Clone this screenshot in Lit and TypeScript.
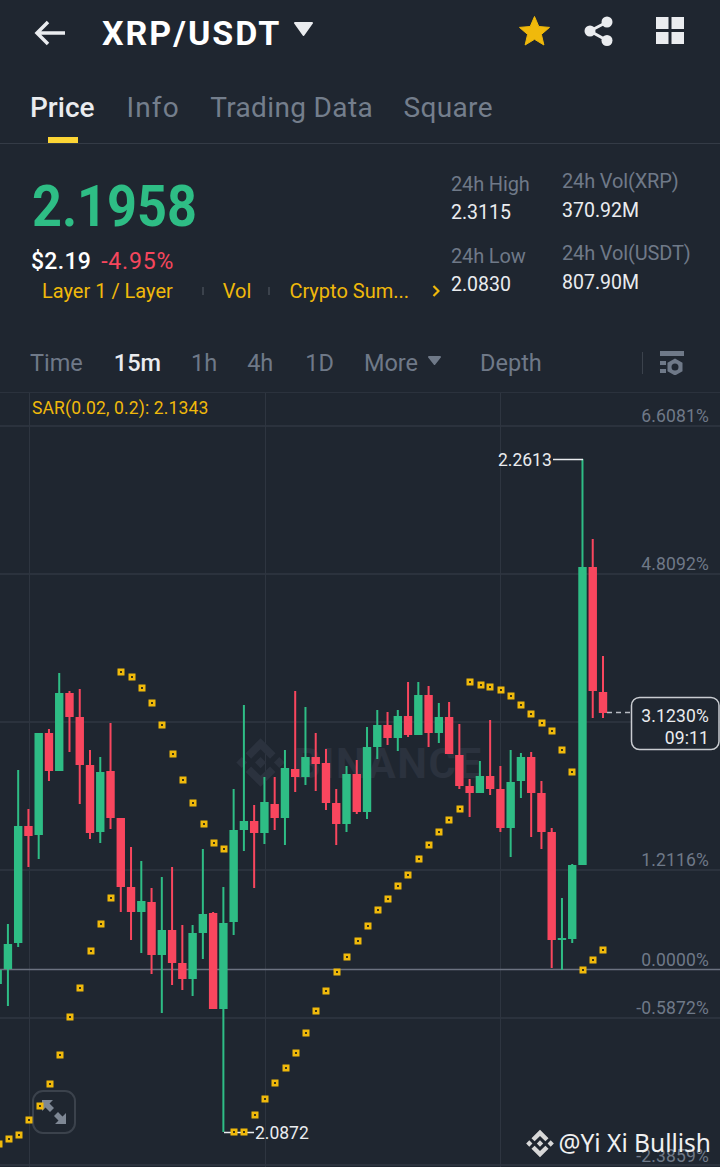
import { LitElement, css, html, svg } from 'lit';
import { customElement } from 'lit/decorators.js';

// [wickTop, wickBottom, bodyTop, bodyBottom, up]
type Candle = [number, number, number, number, number];

const CANDLES: Candle[] = [
  [960, 1000, 970, 984, 1], [924, 1006, 944, 969, 1], [770, 947, 826, 943, 1], [809, 867, 826, 836, 0],
  [733, 859, 733, 835, 1], [729, 781, 733, 771, 0], [673, 771, 693, 771, 1], [691, 752, 693, 717, 0],
  [689, 804, 717, 765, 0], [750, 839, 765, 833, 0], [757, 843, 772, 832, 1], [723, 829, 771, 818, 0],
  [818, 912, 818, 887, 0], [847, 940, 887, 912, 0], [861, 953, 901, 912, 1], [888, 974, 902, 955, 0],
  [877, 1013, 930, 955, 1], [867, 985, 930, 963, 0], [925, 990, 963, 979, 0], [925, 996, 933, 979, 1],
  [849, 959, 914, 933, 1], [912, 1009, 913, 1009, 0], [887, 1132, 923, 1009, 1], [789, 935, 830, 922, 1],
  [705, 851, 821, 830, 1], [805, 888, 821, 833, 0], [777, 844, 802, 833, 1], [777, 830, 804, 818, 0],
  [750, 845, 768, 818, 1], [691, 792, 769, 777, 0], [707, 785, 757, 777, 1], [733, 791, 757, 764, 0],
  [749, 810, 763, 803, 0], [789, 845, 803, 824, 0], [766, 832, 774, 824, 1], [760, 814, 774, 812, 0],
  [727, 819, 747, 812, 1], [710, 759, 725, 747, 1], [712, 745, 725, 738, 0], [710, 751, 716, 738, 1],
  [682, 737, 716, 735, 0], [682, 735, 695, 735, 1], [686, 747, 695, 733, 0], [703, 743, 717, 733, 1],
  [702, 754, 717, 754, 0], [724, 789, 755, 786, 0], [779, 817, 786, 793, 0], [761, 793, 776, 793, 1],
  [720, 795, 776, 789, 0], [766, 832, 789, 828, 0], [750, 857, 782, 828, 1], [753, 798, 757, 781, 1],
  [752, 837, 757, 793, 0], [781, 849, 793, 832, 0], [828, 968, 832, 940, 0], [898, 970, 938, 940, 1],
  [864, 943, 865, 939, 1], [459, 865, 567, 865, 1], [539, 718, 567, 691, 0], [656, 718, 692, 713, 0],
];

// [x, y] of the SAR dots
const SAR: [number, number][] = [
  [-1, 1144], [9, 1139], [19, 1135], [29, 1120], [40, 1106], [50, 1084], [60, 1055], [70, 1017], [80, 988],
  [91, 951], [101, 924], [111, 898], [121, 672], [132, 677], [142, 688], [152, 703], [162, 725], [173, 754],
  [183, 780], [193, 803], [204, 824], [214, 843], [224, 849], [234, 1132], [244, 1132], [255, 1115], [265, 1099],
  [275, 1083], [286, 1068], [296, 1053], [306, 1033], [316, 1011], [326, 991], [337, 972], [347, 957], [358, 941],
  [368, 926], [378, 910], [388, 899], [398, 886], [408, 875], [419, 859], [429, 845], [439, 832], [449, 820],
  [460, 809], [470, 682], [481, 685], [490, 687], [501, 690], [511, 696], [521, 705], [531, 714], [542, 723],
  [552, 731], [562, 750], [572, 772], [583, 970], [593, 960], [603, 950],
];

const AXIS: [string, number][] = [
  ['6.6081%', 422], ['4.8092%', 570], ['1.2116%', 866], ['0.0000%', 966], ['-0.5872%', 1014], ['-2.3859%', 1162],
];

const LOGO =
  'M38.73 53.2L63 28.93l24.28 24.28 14.12-14.12L63 .69 24.61 39.08zM.7 63l14.12-14.12L28.94 63 14.82 77.12zM38.73 72.8L63 97.07l24.28-24.28 14.13 14.1L63 125.31 24.61 86.92l-.02-.02zM97.06 63l14.12-14.12L125.3 63l-14.12 14.12zM77.32 63L63 48.67 52.41 59.26l-1.22 1.22-2.51 2.51L63 77.32 77.32 63z';

@customElement('app-root')
export class AppRoot extends LitElement {
  static styles = css`
    :host {
      display: block;
      position: relative;
      width: 720px;
      height: 1167px;
      overflow: hidden;
      background: #1f2630;
      color: #eaecef;
      font-family: Roboto, 'Noto Sans', sans-serif;
    }

    .header {
      display: flex;
      align-items: center;
      height: 62px;
      padding: 3px 36px 0 34px;
      box-sizing: border-box;
    }

    .title {
      margin-left: 36px;
      font-size: 34px;
      font-weight: 700;
      letter-spacing: 2px;
      color: #fff;
    }

    .caret {
      margin: 0 0 8px 13px;
    }

    .actions {
      display: flex;
      align-items: center;
      margin: 0 0 4px auto;
    }

    .star {
      margin-right: 34px;
    }

    .share {
      margin-right: 43px;
    }

    .tabs {
      display: flex;
      gap: 30.5px;
      height: 82px;
      padding: 29px 0 0 30px;
      box-sizing: border-box;
      border-bottom: 1px solid #343b46;
      font-size: 28px;
      letter-spacing: 0.35px;
      color: #747e8c;
    }

    .tab {
      position: relative;
    }

    .tab.wide {
      letter-spacing: 1.1px;
    }

    .tab.on {
      margin-right: 1.5px;
      color: #eaecef;
      font-weight: 500;
      letter-spacing: 0;
    }

    .tab.on::after {
      content: '';
      position: absolute;
      left: 18px;
      top: 46px;
      width: 30px;
      height: 6px;
      background: #fcd535;
    }

    .summary {
      display: flex;
      height: 196px;
      box-sizing: border-box;
      padding-top: 27px;
    }

    .quote {
      width: 451px;
      padding: 2px 0 0 31px;
      box-sizing: border-box;
    }

    .last {
      margin-left: 1px;
      font-size: 58px;
      font-weight: 700;
      line-height: 66px;
      transform: scaleX(0.9);
      transform-origin: left;
      color: #2ebd85;
    }

    .fiat {
      display: flex;
      gap: 10px;
      margin-top: 9px;
      font-size: 23px;
      line-height: 28px;
      letter-spacing: 0.3px;
    }

    .fiat b {
      font-weight: 500;
      color: #fff;
    }

    .fiat span {
      letter-spacing: 0.8px;
      color: #f6465d;
    }

    .tags {
      display: flex;
      align-items: center;
      margin: 3px 0 0 11px;
      font-size: 20px;
      line-height: 24px;
      white-space: nowrap;
      color: #f0b90b;
    }

    .tags i {
      width: 2px;
      height: 8px;
      margin: 0 19px 0 29px;
      background: #3b424c;
    }

    .tags .next {
      margin-left: 17px;
    }

    .tags svg {
      margin-left: 23px;
    }

    .stat {
      display: flex;
      flex-direction: column;
      font-size: 20px;
      white-space: nowrap;
    }

    .stats {
      width: 111px;
      display: flex;
      flex-direction: column;
      gap: 14px;
    }

    .stats.b {
      gap: 12px;
      margin-top: -3px;
    }

    .stat label {
      line-height: 26px;
      letter-spacing: -0.15px;
      color: #6f7988;
    }

    .stat span {
      line-height: 32px;
      font-size: 19.5px;
      color: #eaecef;
    }

    .stats.b span {
      line-height: 34px;
    }

    .times {
      display: flex;
      align-items: center;
      gap: 30px;
      height: 53px;
      box-sizing: border-box;
      padding: 0 0 7px 30px;
      border-bottom: 1px solid #2b323d;
      font-size: 23.5px;
      color: #6f7988;
    }

    .times b {
      margin-left: 1px;
      font-weight: 500;
      color: #eaecef;
    }

    .day {
      margin-left: 2px;
    }

    .more {
      display: flex;
      align-items: center;
      gap: 10px;
    }

    .more svg {
      margin-bottom: 5px;
    }

    .depth {
      margin-left: 9px;
    }

    .tools {
      display: flex;
      align-items: center;
      gap: 17px;
      margin-left: auto;
      padding-right: 36px;
    }

    .tools i {
      width: 1px;
      height: 22px;
      background: #3b424c;
    }

    .chart {
      display: block;
      width: 720px;
      height: 774px;
    }

    .grid {
      stroke: #2b323d;
      stroke-width: 2;
    }

    .vgrid {
      stroke: #2e3540;
      stroke-width: 1;
    }

    .zero {
      stroke: #6b7280;
      stroke-width: 1.5;
    }

    .axis {
      font-size: 17.5px;
      letter-spacing: 0.15px;
      fill: #6f7988;
      text-anchor: end;
    }

    .sar-label {
      font-size: 17.5px;
      letter-spacing: 0.15px;
      fill: #f0b90b;
    }

    .mark {
      font-size: 17.5px;
      fill: #eaecef;
    }

    .mark-line {
      stroke: #eaecef;
      stroke-width: 1.5;
    }

    .now-box {
      fill: #1f2630;
      stroke: #c9ccd1;
      stroke-width: 1.5;
    }

    .now {
      font-size: 17.5px;
      letter-spacing: 0.15px;
      fill: #eaecef;
      text-anchor: end;
    }

    .dash {
      stroke: #b7bbc2;
      stroke-width: 1.5;
      stroke-dasharray: 5 4;
    }

    .brand {
      font-size: 42px;
      font-weight: 700;
      letter-spacing: 1.5px;
      fill: #2b323e;
    }

    .expand {
      fill: none;
      stroke: #3b424c;
      stroke-width: 2;
    }

    .credit {
      position: absolute;
      right: 9px;
      bottom: 7px;
      display: flex;
      align-items: center;
      gap: 4px;
      font-family: 'Noto Sans', sans-serif;
      font-size: 24.5px;
      line-height: 34px;
      color: #f0f0f0;
    }
  `;

  private candle(c: Candle, i: number) {
    const x = 603 - (59 - i) * 10.26;
    const fill = c[4] ? '#2ebd85' : '#f9465e';
    return svg`
      <rect x=${x - 1} y=${c[0]} width="2" height=${c[1] - c[0]} fill=${fill}></rect>
      <rect x=${x - 4.2} y=${c[2]} width="8.4" height=${c[3] - c[2]} fill=${fill}></rect>
    `;
  }

  private dot([x, y]: [number, number]) {
    return svg`
      <rect x=${x - 3.5} y=${y - 3.5} width="7" height="7" fill="#f0b90b"></rect>
      <rect x=${x - 1} y=${y - 1} width="2" height="2" fill="#3d3613"></rect>
    `;
  }

  private renderChart() {
    return html`
      <svg class="chart" viewBox="0 393 720 774">
        ${[426, 574, 722, 870, 1018, 1165].map((y) => svg`<line class="grid" x1="0" x2="720" y1=${y} y2=${y}></line>`)}
        ${[29.5, 265.5, 500.5].map((x) => svg`<line class="vgrid" x1=${x} x2=${x} y1="393" y2="1167"></line>`)}
        <line class="zero" x1="0" x2="720" y1="969.5" y2="969.5"></line>

        <path d=${LOGO} fill="#2b323e" transform="translate(236 738) scale(0.39)"></path>
        <text class="brand" x="294" y="778">BINANCE</text>

        <text class="sar-label" x="32" y="414">SAR(0.02, 0.2): 2.1343</text>
        ${AXIS.map(([t, y]) => svg`<text class="axis" x="709" y=${y}>${t}</text>`)}

        ${CANDLES.map((c, i) => this.candle(c, i))}

        <line class="mark-line" x1="553" x2="583" y1="459.5" y2="459.5"></line>
        <text class="mark" x="498" y="466">2.2613</text>
        <line class="mark-line" x1="224" x2="254" y1="1132.5" y2="1132.5"></line>
        <text class="mark" x="255" y="1139">2.0872</text>

        <rect class="expand" x="33" y="1091" width="42" height="42" rx="10"></rect>
        <path fill="#7e8794" d="M42 1100h11l-3.5 3.5 4.5 4.5-4 4-4.500-4.500-3.500 3.500zM66 1124h-11l3.500-3.500-4.500-4.500 4-4 4.500 4.500 3.500-3.500z"></path>

        ${SAR.map((d) => this.dot(d))}

        <line class="dash" x1="607" x2="630" y1="712.5" y2="712.5"></line>
        <rect class="now-box" x="631.5" y="697.5" width="87.500" height="52" rx="8"></rect>
        <text class="now" x="709" y="722">3.1230%</text>
        <text class="now" x="709" y="744">09:11</text>
      </svg>
    `;
  }

  render() {
    return html`
      <div class="header">
        <svg width="32" height="26" viewBox="0 0 32 26" fill="none" stroke="#eaecef" stroke-width="3.500">
          <path d="M31 13H4M14 2L3 13l11 11"></path>
        </svg>
        <span class="title">XRP/USDT</span>
        <svg class="caret" width="19" height="14" viewBox="0 0 19 14"><path d="M1 0h17a1 1 0 0 1 .8 1.600L10.300 13.500a1 1 0 0 1-1.600 0L.2 1.600A1 1 0 0 1 1 0z" fill="#eaecef"></path></svg>
        <div class="actions">
          <svg class="star" width="31" height="30" viewBox="0 0 31 30">
            <path d="M15.500 0.500l4.300 10 10.700.9-8.100 7 2.500 10.600-9.400-5.700-9.400 5.700 2.500-10.600-8.100-7 10.700-.9z" fill="#f0b90b" stroke="#f0b90b" stroke-linejoin="round"></path>
          </svg>
          <svg class="share" width="29" height="30" viewBox="0 0 29 30" fill="#eaecef">
            <circle cx="23" cy="6" r="5.500"></circle>
            <circle cx="6" cy="15" r="5.500"></circle>
            <circle cx="23" cy="24.500" r="5.500"></circle>
            <path d="M23 6L6 15l17 9.500" fill="none" stroke="#eaecef" stroke-width="3"></path>
          </svg>
          <svg width="28" height="27" viewBox="0 0 28 27" fill="#eaecef">
            <rect width="12.500" height="12"></rect>
            <rect x="15.500" width="12.500" height="12"></rect>
            <rect y="15" width="12.500" height="12"></rect>
            <rect x="15.500" y="15" width="12.500" height="12"></rect>
          </svg>
        </div>
      </div>

      <div class="tabs">
        <div class="tab on">Price</div>
        <div class="tab wide">Info</div>
        <div class="tab">Trading Data</div>
        <div class="tab">Square</div>
      </div>

      <div class="summary">
        <div class="quote">
          <div class="last">2.1958</div>
          <div class="fiat"><b>$2.19</b><span>-4.95%</span></div>
          <div class="tags">
            Layer 1 / Layer<i></i>Vol<i class="next"></i>Crypto Sum...
            <svg width="8" height="12" viewBox="0 0 8 12" fill="none" stroke="#f0b90b" stroke-width="2.200"><path d="M1.500 1l5 5-5 5"></path></svg>
          </div>
        </div>
        <div class="stats">
          <div class="stat"><label>24h High</label><span>2.3115</span></div>
          <div class="stat"><label>24h Low</label><span>2.0830</span></div>
        </div>
        <div class="stats b">
          <div class="stat"><label>24h Vol(XRP)</label><span>370.92M</span></div>
          <div class="stat"><label>24h Vol(USDT)</label><span>807.90M</span></div>
        </div>
      </div>

      <div class="times">
        <span>Time</span>
        <b>15m</b>
        <span>1h</span>
        <span>4h</span>
        <span class="day">1D</span>
        <span class="more">More
          <svg width="13" height="9" viewBox="0 0 13 9"><path d="M1 0h11a1 1 0 0 1 .8 1.600L7.300 8.600a1 1 0 0 1-1.600 0L.2 1.600A1 1 0 0 1 1 0z" fill="#6f7988"></path></svg>
        </span>
        <span class="depth">Depth</span>
        <div class="tools">
          <i></i>
          <svg width="24" height="24" viewBox="0 0 24 24" fill="#6f7988">
            <rect width="24" height="5"></rect>
            <rect y="10" width="6" height="4"></rect>
            <rect y="18" width="6" height="4"></rect>
            <path fill-rule="evenodd" d="M15 7.500l7.500 4.300v8.400L15 24.500l-7.500-4.300v-8.400zM15 12.500a3.500 3.500 0 1 0 0 7 3.500 3.500 0 0 0 0-7z"></path>
          </svg>
        </div>
      </div>

      ${this.renderChart()}

      <div class="credit">
        <svg width="28" height="29" viewBox="0 0 126 126"><path d=${LOGO} fill="#d8d8d8"></path></svg>
        <span>@Yi Xi Bullish</span>
      </div>
    `;
  }
}
